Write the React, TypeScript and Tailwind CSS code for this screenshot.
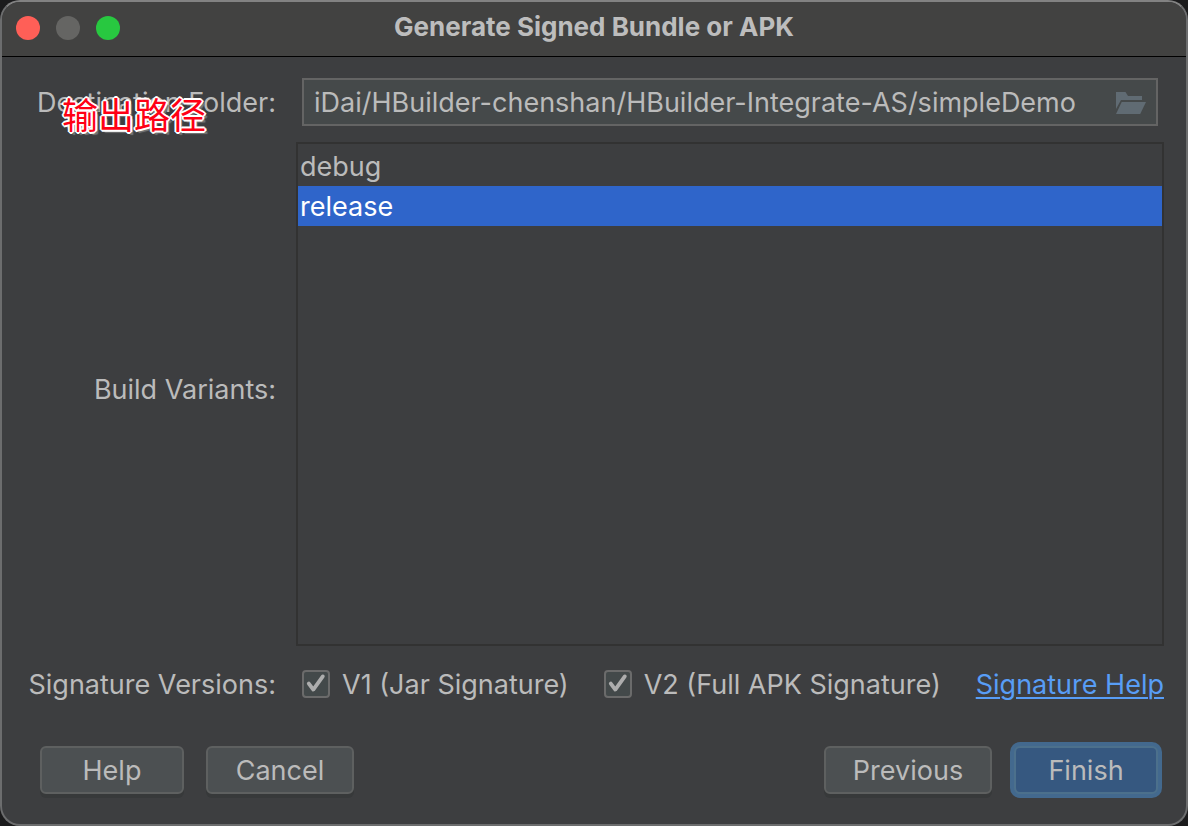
import { useState } from 'react'
import type { ReactNode } from 'react'
import clsx from 'clsx'

const variants = ['debug', 'release']

function FolderIcon() {
  return (
    <svg viewBox="0 0 30 22" className="w-[30px] h-[22px]" fill="#606b73" aria-hidden="true">
      <path d="M0 0H9.5L12 4H26V8H5L0 17Z" />
      <path d="M5.7 10H30L24.2 22H0Z" />
    </svg>
  )
}

function SignatureOption({ id, label }: { id: string; label: string }) {
  return (
    <div className="flex items-center gap-3">
      <span className="relative flex size-7">
        <input
          id={id}
          type="checkbox"
          defaultChecked
          className="peer size-7 appearance-none rounded-sm border-2 border-[#6b6b6b] bg-[#43494a]"
        />
        <svg
          viewBox="0 0 28 28"
          className="pointer-events-none absolute inset-0 hidden size-7 peer-checked:block"
          fill="none"
          stroke="#adadad"
          strokeWidth="3.8"
          aria-hidden="true"
        >
          <path d="M6.8 13.6L11.3 19.6L20.8 6.4" strokeLinecap="round" strokeLinejoin="round" />
        </svg>
      </span>
      <label htmlFor={id} className="pt-0.5">{label}</label>
    </div>
  )
}

function DialogButton({ className, children }: { className?: string; children: ReactNode }) {
  return (
    <button
      type="button"
      className={clsx(
        'h-12 rounded-md border-2 border-[#5e6060] bg-[#4c5052] pt-0.5 shadow-[0_4px_0_#37393a]',
        className,
      )}
    >
      {children}
    </button>
  )
}

export default function App() {
  const [selected, setSelected] = useState('release')

  return (
    <div className="min-h-screen flex bg-[#1b1b1c]">
      <main className="flex flex-1 flex-col overflow-hidden rounded-[20px] border-2 border-[#6c6d6e] border-t-[#828282] bg-[#3d3e40] font-['Inter','Noto_Sans_CJK_SC',sans-serif] text-[27px] leading-8 text-[#bbbbbb]">
        <header className="grid h-[55px] grid-cols-[1fr_auto_1fr] items-center border-b border-black bg-[#424241] px-3.5 pb-0.5">
          <div className="flex gap-4">
            <button type="button" aria-label="Close" className="size-6 rounded-full bg-[#ff5f57]" />
            <button type="button" aria-label="Minimize" className="size-6 rounded-full bg-[#656563]" />
            <button type="button" aria-label="Zoom" className="size-6 rounded-full bg-[#28c840]" />
          </div>
          <h1 className="pb-0.5 text-[26px] font-bold text-[#bdbdbd]">Generate Signed Bundle or APK</h1>
        </header>

        <div className="grid flex-1 grid-cols-[274px_1fr] grid-rows-[auto_1fr_auto] gap-x-5 pt-[21px] pr-[22px]">
          <div className="relative flex items-center justify-end whitespace-nowrap pt-0.5">
            <label htmlFor="destination">Destination Folder:</label>
            <span className="absolute top-5 left-[60px] text-4xl leading-9 text-[#ff0015] [text-shadow:2px_0_0_#fff,-2px_0_0_#fff,0_2px_0_#fff,0_-2px_0_#fff,1px_1px_0_#fff,-1px_1px_0_#fff,1px_-1px_0_#fff,-1px_-1px_0_#fff,3px_3px_1px_#777]">
              输出路径
            </span>
          </div>
          <div className="mx-1.5 flex h-12 items-center border-2 border-[#646464] bg-[#45494a] px-2.5">
            <input
              id="destination"
              type="text"
              defaultValue="iDai/HBuilder-chenshan/HBuilder-Integrate-AS/simpleDemo"
              className="min-w-0 flex-1 bg-transparent pt-0.5 outline-none"
            />
            <button type="button" aria-label="Browse" className="ml-2 pt-0.5">
              <FolderIcon />
            </button>
          </div>

          <div id="variants-label" className="mt-4 flex items-center justify-end whitespace-nowrap pb-2">
            Build Variants:
          </div>
          <div
            role="listbox"
            aria-labelledby="variants-label"
            className="mt-4 flex flex-col border-2 border-[#323232] pt-0.5"
          >
            {variants.map(name => (
              <button
                key={name}
                type="button"
                role="option"
                aria-selected={selected === name}
                onClick={() => setSelected(name)}
                className={clsx('h-10 px-0.5 pt-0.5 text-left', selected === name && 'bg-[#2f65ca] text-white')}
              >
                {name}
              </button>
            ))}
          </div>

          <div className="flex h-[76px] items-center justify-end whitespace-nowrap pt-0.5">Signature Versions:</div>
          <div className="flex h-[76px] items-center justify-between whitespace-nowrap pl-1.5">
            <SignatureOption id="v1" label="V1 (Jar Signature)" />
            <SignatureOption id="v2" label="V2 (Full APK Signature)" />
            <a href="#signature-help" className="pt-0.5 text-[#589df6] underline decoration-2 underline-offset-3">
              Signature Help
            </a>
          </div>
        </div>

        <footer className="flex justify-between pt-6 pr-[26px] pb-[30px] pl-[38px]">
          <div className="flex gap-[22px]">
            <DialogButton className="w-36">Help</DialogButton>
            <DialogButton className="w-[148px]">Cancel</DialogButton>
          </div>
          <div className="flex gap-[22px]">
            <DialogButton className="w-42">Previous</DialogButton>
            <button
              type="button"
              className="mr-0.5 h-12 w-36 rounded-md border-2 border-[#4c708c] bg-[#365880] pt-0.5 ring-4 ring-[#43698e]"
            >
              Finish
            </button>
          </div>
        </footer>
      </main>
    </div>
  )
}
